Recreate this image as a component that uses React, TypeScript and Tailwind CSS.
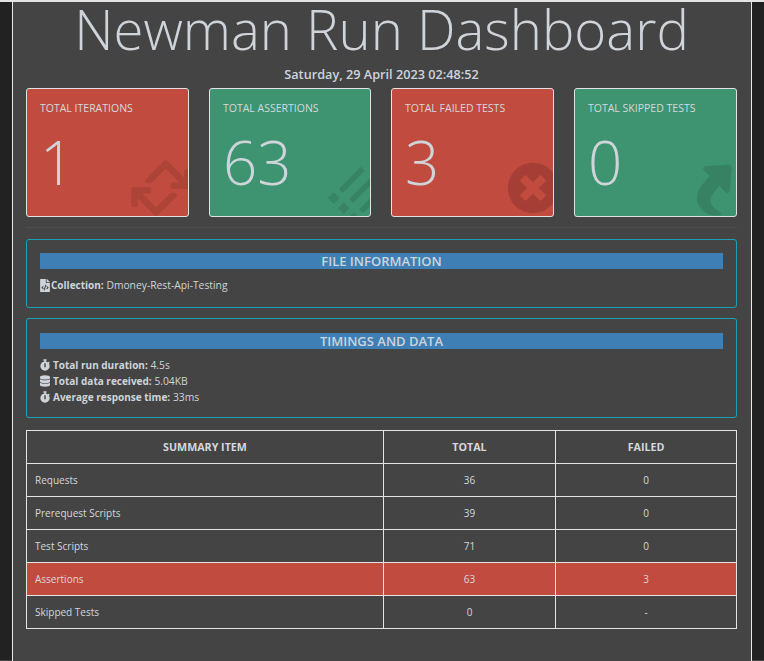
import { FaDatabase, FaFileCode, FaList, FaRetweet, FaShare, FaStopwatch, FaTimesCircle } from "react-icons/fa"
import type { ReactNode } from "react"

const RED = "bg-[#c24b3f]"
const GREEN = "bg-[#3e9470]"

function StatCard({ title, value, tone, icon }: { title: string; value: string; tone: string; icon: ReactNode }) {
  return (
    <div className={`relative h-[129px] overflow-hidden rounded-[3px] border border-[#dfe3e6] pl-[13px] pt-[10px] ${tone}`}>
      <div className="text-[10.5px] leading-[18px] text-[#d5d9dd]">{title}</div>
      <div className="mt-[9px] text-[60px] font-light leading-[72px] text-[#ced4da]">{value}</div>
      {icon}
    </div>
  )
}

function Panel({ heading, top, children }: { heading: string; top: string; children: ReactNode }) {
  return (
    <div className={`rounded-[3px] border border-[#17a2b8] px-[13px] ${top}`}>
      <div className="h-4 bg-[#3e80b6] text-center text-[13px] font-semibold leading-4 text-[#ced4da]">{heading}</div>
      <div className="mt-2 leading-4">{children}</div>
    </div>
  )
}

function Info({ icon, label, value }: { icon: ReactNode; label: string; value: string }) {
  return (
    <div className="flex items-center gap-[3px] text-[#ced4da]">
      {icon}
      <span className="text-[10.3px]">
        <b className="text-[10px] font-bold">{label}</b> {value}
      </span>
    </div>
  )
}

const rows = [
  { name: "Requests", total: "36", failed: "0" },
  { name: "Prerequest Scripts", total: "39", failed: "0" },
  { name: "Test Scripts", total: "71", failed: "0" },
  { name: "Assertions", total: "63", failed: "3", bad: true },
  { name: "Skipped Tests", total: "0", failed: "-" },
]

export default function App() {
  return (
    <div className="h-[661px] overflow-hidden bg-[#444444] font-['Open_Sans','Noto_Sans',sans-serif]">
      <div className="h-[660px] border-t-2 border-[#e4e4e4] bg-[#222222]">
        <div className="ml-3 h-[661px] w-[740px] border-x border-[#e8e8e8] bg-[#444444] pl-[13px] pr-[14px]">
          <h1 className="h-[54px] text-center text-[54.5px] font-light leading-[54px] text-[#ced4da]">Newman Run Dashboard</h1>
          <div className="mt-[10px] text-center text-[12.7px] font-semibold leading-4 text-[#ced4da]">Saturday, 29 April 2023 02:48:52</div>
          <div className="mt-[6px] grid grid-cols-[163px_162px_163px_163px] gap-5">
            <StatCard
              title="TOTAL ITERATIONS"
              value="1"
              tone={RED}
              icon={<FaRetweet className="absolute left-[100px] top-[65px] size-[68px] -rotate-45 text-black/10" />}
            />
            <StatCard
              title="TOTAL ASSERTIONS"
              value="63"
              tone={GREEN}
              icon={<FaList className="absolute left-[124px] top-[83px] size-[46px] -rotate-45 text-black/10" />}
            />
            <StatCard
              title="TOTAL FAILED TESTS"
              value="3"
              tone={RED}
              icon={<FaTimesCircle className="absolute left-[115px] top-[73px] size-[52px] text-black/15" />}
            />
            <StatCard
              title="TOTAL SKIPPED TESTS"
              value="0"
              tone={GREEN}
              icon={<FaShare className="absolute left-[115px] top-[72px] size-[52px] -rotate-45 text-black/[.12]" />}
            />
          </div>
          <hr className="mt-[10px] border-[#4f4f4f]" />
          <div className="mt-[11px] flex flex-col gap-[10px]">
            <div className="h-[69px]">
              <Panel heading="FILE INFORMATION" top="pt-[13px] pb-[14px]">
                <Info
                  icon={<FaFileCode className="-mr-[2px] h-[13px] w-[10px]" />}
                  label="Collection:"
                  value="Dmoney-Rest-Api-Testing"
                />
              </Panel>
            </div>
            <div className="h-[101px]">
              <Panel heading="TIMINGS AND DATA" top="pt-[14px] pb-[12px]">
                <Info icon={<FaStopwatch className="h-3 w-[10px]" />} label="Total run duration:" value="4.5s" />
                <Info icon={<FaDatabase className="h-3 w-[10px]" />} label="Total data received:" value="5.04KB" />
                <Info icon={<FaStopwatch className="h-3 w-[10px]" />} label="Average response time:" value="33ms" />
              </Panel>
            </div>
          </div>
          <table className="mt-[11px] w-[710px] table-fixed border-collapse text-[10px] text-[#d3d8dd]">
            <colgroup>
              <col className="w-[357px]" />
              <col className="w-[172px]" />
              <col className="w-[181px]" />
            </colgroup>
            <thead>
              <tr className="h-[33px] text-[10.7px]">
                <th className="border border-[#e4e4e4] pt-px font-bold">SUMMARY ITEM</th>
                <th className="border border-[#e4e4e4] pt-px font-bold">TOTAL</th>
                <th className="border border-[#e4e4e4] pt-px font-bold">FAILED</th>
              </tr>
            </thead>
            <tbody>
              {rows.map((row) => (
                <tr key={row.name} className={row.bad ? `h-[33px] ${RED}` : "h-[33px]"}>
                  <td className="border border-[#e4e4e4] pl-2 pt-px">{row.name}</td>
                  <td className="border border-[#e4e4e4] pt-px text-center">{row.total}</td>
                  <td className="border border-[#e4e4e4] pt-px text-center">{row.failed}</td>
                </tr>
              ))}
            </tbody>
          </table>
        </div>
      </div>
    </div>
  )
}
